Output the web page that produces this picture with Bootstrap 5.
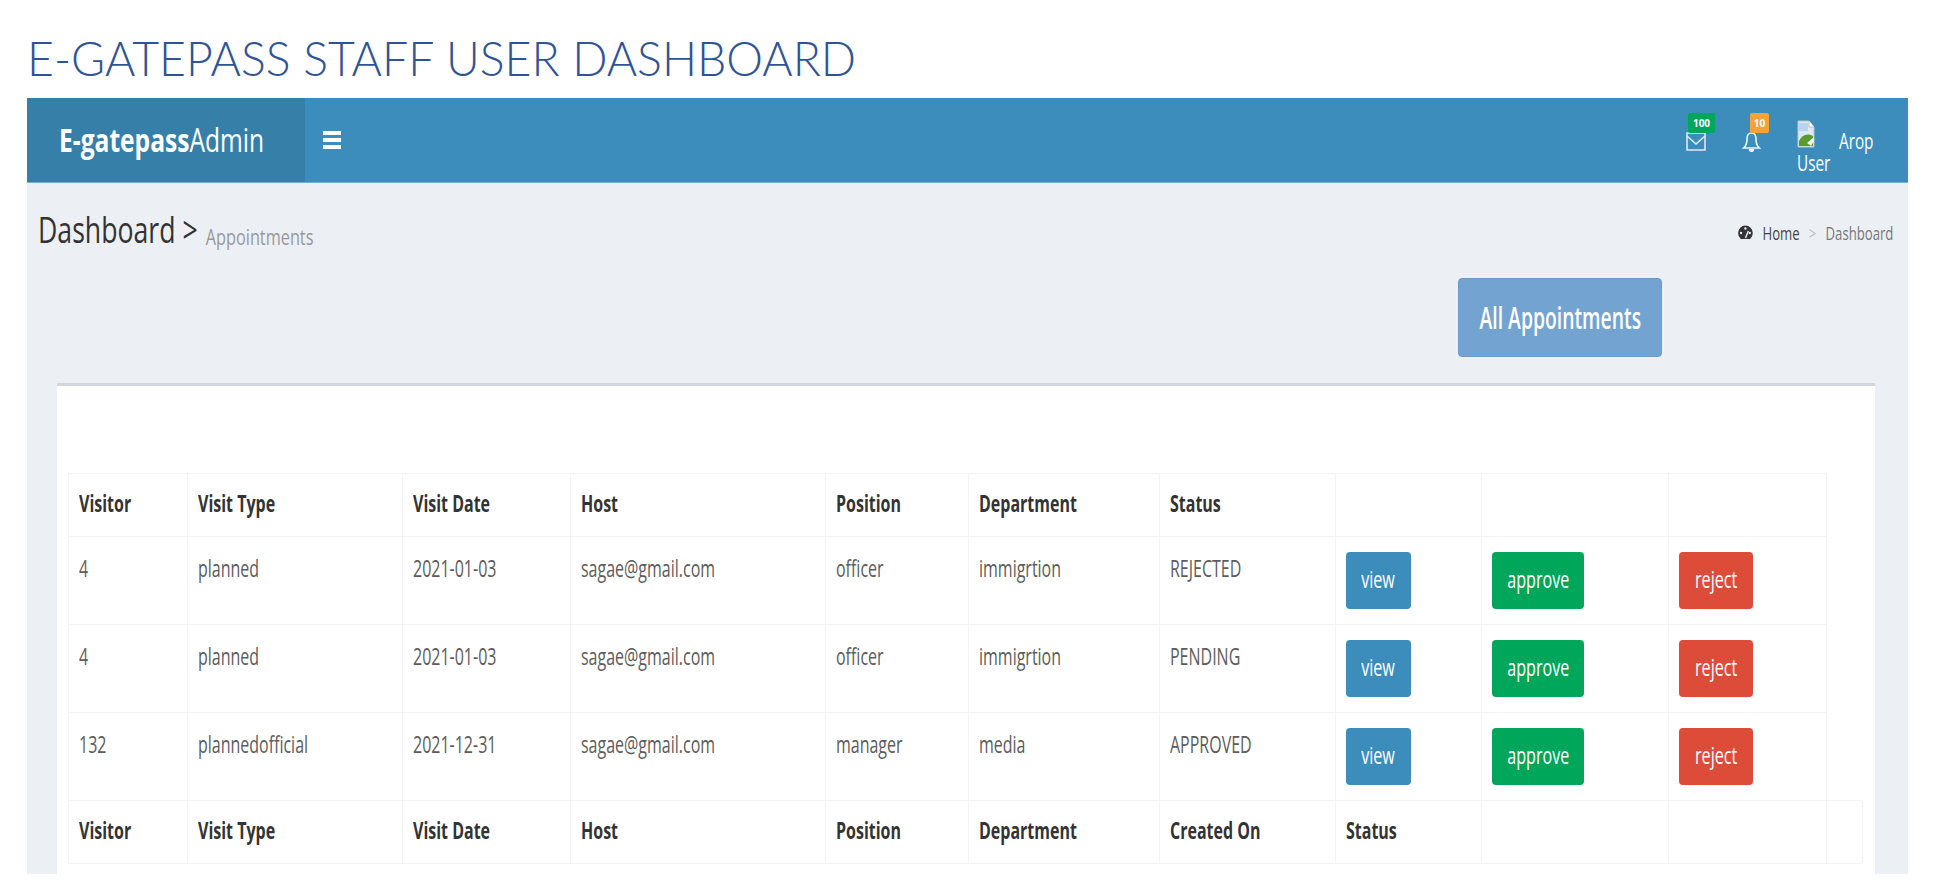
<!DOCTYPE html>
<html lang="en">
<head>
<meta charset="utf-8">
<title>E-Gatepass</title>
<link rel="stylesheet" href="https://cdn.jsdelivr.net/npm/bootstrap@5.3.0/dist/css/bootstrap.min.css">
<style>
html,body{margin:0;background:#fff;overflow:hidden}
body{font-family:"Open Sans",sans-serif;color:#333}
.sq{display:inline-block;transform:scaleX(.695);transform-origin:0 50%;white-space:nowrap}
.sqc{display:inline-block;transform:scaleX(.7);transform-origin:50% 50%;white-space:nowrap}
.sqr{display:inline-flex;align-items:center;transform:scaleX(.71);transform-origin:100% 50%;white-space:nowrap}
.shell{margin-left:27px;width:1881px}
.doc-title{font-family:Lato,sans-serif;font-weight:300;font-size:46.4px;line-height:98px;height:98px;margin:0;color:#2f5496;white-space:nowrap;padding-top:9px}
.topbar{position:relative;height:85px;background:#3c8dbc;color:#fff;border-bottom:1px solid #6fb0d6}
.brandbox{width:278px;background:#367fa9;padding-left:32px;font-size:33px;line-height:84px}
.brandbox .sq{transform:scaleX(.745)}
.burger{margin-left:18px;width:18px;gap:3px}
.burger i{display:block;height:4px;background:#fff}
.tool{position:absolute;display:block}
.t-mail{left:1659px;top:34px;width:20px;height:19px}
.t-bell{left:1715px;top:34px;width:19px;height:20px}
.tip{position:absolute;top:15px;height:20px;border-radius:2px;color:#fff;font-size:10px;font-weight:700;line-height:20px;text-align:center}
.tip-g{left:1661px;width:27px;background:#00a65a}
.tip-o{left:1723px;width:19px;background:#f2a33a}
.ava{position:absolute;left:1770px;top:22px;width:60px;font-size:22px;line-height:27px;z-index:2}
.ava svg{display:block;width:18px;height:28px}
.ava .sq{display:block;margin-top:1px}
.ava .fade{color:#fff;margin-top:8px}
.who{position:absolute;left:1812px;top:26px;font-size:22px;line-height:32px}
.crumbs{height:95px;background:#ecf0f5;padding:25px 15px 0 11px}
.crumb-h{font-size:36px;line-height:44px;color:#333;transform:scaleX(.74)}
.crumb-s{font-size:22px;color:#999;margin-left:11px;vertical-align:-2px}
.crumb-r{font-size:18.5px;color:#444;line-height:22px;padding-top:14px}
.crumb-r svg{width:22px;height:16px;margin-right:13px}
.pathsep{color:#bbb;margin:0 13px}
.pathnow{color:#777}
.content{background:#ecf0f5;padding:0 33px 12px 30px;height:596px}
.actions{height:105px;padding-right:213px}
.btn.all{width:204px;height:79px;background:#73a3d0;border:1px solid #6a9bca;color:#fff;font-size:30px;font-weight:600;padding:0;border-radius:4px;opacity:1;display:flex;align-items:center;justify-content:center}
.btn.all .sqc{transform:scaleX(.645);flex:none}
.panel{background:#fff;border-top:3px solid #d2d6de;padding:87px 0 0 11px;height:491px}
.gate-table{table-layout:fixed;width:1794px;margin:0;border-collapse:collapse;font-size:23px;color:#5c5c5c}
.gate-table th,.gate-table td{border:1px solid #f4f4f4;padding:0 0 0 10px;box-shadow:none;line-height:30px}
.gate-table th{color:#333;font-weight:700;vertical-align:middle}
.gate-table th .sq{padding-bottom:4px}
.gate-table td{vertical-align:top}
.gate-table .dat{padding-top:16px}
.gate-table .act{padding-top:15px;padding-bottom:15px}
.r-h{height:63px}.r-a{height:87px}.r-b{height:88px}.r-f{height:63px}
.c1{width:119px}.c2{width:215px}.c3{width:168px}.c4{width:255px}.c5{width:143px}.c6{width:191px}.c7{width:176px}.c8{width:146px}.c9{width:187px}.c10{width:158px}.c11{width:36px}
.btn.act-btn{height:57px;padding:0;border:0;border-radius:4px;color:#fff;font-size:23px;line-height:55px;display:block}
.b-v{width:65px;background:#3c8dbc}
.b-a{width:92px;background:#00a65a}
.b-r{width:74px;background:#dd4b39}
</style>
</head>
<body>
<div class="shell">
  <h1 class="doc-title">E-GATEPASS STAFF USER DASHBOARD</h1>
  <header class="topbar d-flex">
    <div class="brandbox"><span class="sq"><b>E-gatepass</b>Admin</span></div>
    <div class="burger d-flex flex-column justify-content-center"><i></i><i></i><i></i></div>
    <svg class="tool t-mail" viewBox="0 0 20 19" fill="none" stroke="#dceaf3" stroke-width="1.6"><path d="M1 1h18v17H1z"/><path d="M1 4l9 8 9-8"/></svg>
    <span class="tip tip-g">100</span>
    <svg class="tool t-bell" viewBox="0 0 19 20" fill="none" stroke="#eef5fa" stroke-width="1.6"><path d="M9.500 1C6 1 5 4 5 7c0 4-1 7-3.500 9h16C15 14 14 11 14 7c0-3-1-6-4.500-6z"/><path d="M7.500 17c0 1.500 1 2.300 2 2.300s2-.8 2-2.300" fill="#eef5fa"/></svg>
    <span class="tip tip-o">10</span>
    <div class="ava">
      <svg viewBox="0 0 18 28"><path d="M1 1h11l5 6v20H1z" fill="#dfe8ee" stroke="#b9c4cc"/><path d="M12 1v6h5" fill="#fff" stroke="#b9c4cc"/><path d="M2 3h9v8H2z" fill="#b7d3ef"/><path d="M2 26v-5c3-6 8-8 14-5v10z" fill="#5a9a2e"/><path d="M10 23l7-6v4l-3 5z" fill="#eef2f4"/></svg>
      <span class="sq">User</span>
      <span class="sq fade">Image</span>
    </div>
    <span class="who"><span class="sq">Arop</span></span>
  </header>
  <div class="crumbs d-flex justify-content-between">
    <div class="d-flex align-items-start"><span class="sq crumb-h">Dashboard &gt;<span class="crumb-s">Appointments</span></span></div>
    <div class="crumb-r"><span class="sqr"><svg viewBox="0 0 16 16" preserveAspectRatio="none"><circle cx="8" cy="8" r="7.500" fill="#333"/><circle cx="8" cy="3.500" r="1.200" fill="#ecf0f5"/><circle cx="3.500" cy="8" r="1.200" fill="#ecf0f5"/><circle cx="12.500" cy="8" r="1.200" fill="#ecf0f5"/><path d="M8 13l3-7" stroke="#ecf0f5" stroke-width="1.500"/><path d="M4 14h8v2H4z" fill="#ecf0f5"/></svg>Home<span class="pathsep">&gt;</span><span class="pathnow">Dashboard</span></span></div>
  </div>
  <main class="content">
    <div class="actions d-flex justify-content-end align-items-start">
      <button class="btn all" disabled><span class="sqc">All Appointments</span></button>
    </div>
    <section class="panel">
      <table class="table gate-table">
        <colgroup><col class="c1"><col class="c2"><col class="c3"><col class="c4"><col class="c5"><col class="c6"><col class="c7"><col class="c8"><col class="c9"><col class="c10"><col class="c11"></colgroup>
        <thead><tr class="r-h"><th><span class="sq">Visitor</span></th><th><span class="sq">Visit Type</span></th><th><span class="sq">Visit Date</span></th><th><span class="sq">Host</span></th><th><span class="sq">Position</span></th><th><span class="sq">Department</span></th><th><span class="sq">Status</span></th><th></th><th></th><th></th></tr></thead>
        <tbody>
        <tr class="r-a"><td class="dat"><span class="sq">4</span></td><td class="dat"><span class="sq">planned</span></td><td class="dat"><span class="sq">2021-01-03</span></td><td class="dat"><span class="sq">sagae@gmail.com</span></td><td class="dat"><span class="sq">officer</span></td><td class="dat"><span class="sq">immigrtion</span></td><td class="dat"><span class="sq">REJECTED</span></td><td class="act"><a class="btn act-btn b-v"><span class="sqc">view</span></a></td><td class="act"><a class="btn act-btn b-a"><span class="sqc">approve</span></a></td><td class="act"><a class="btn act-btn b-r"><span class="sqc">reject</span></a></td></tr>
        <tr class="r-b"><td class="dat"><span class="sq">4</span></td><td class="dat"><span class="sq">planned</span></td><td class="dat"><span class="sq">2021-01-03</span></td><td class="dat"><span class="sq">sagae@gmail.com</span></td><td class="dat"><span class="sq">officer</span></td><td class="dat"><span class="sq">immigrtion</span></td><td class="dat"><span class="sq">PENDING</span></td><td class="act"><a class="btn act-btn b-v"><span class="sqc">view</span></a></td><td class="act"><a class="btn act-btn b-a"><span class="sqc">approve</span></a></td><td class="act"><a class="btn act-btn b-r"><span class="sqc">reject</span></a></td></tr>
        <tr class="r-a"><td class="dat"><span class="sq">132</span></td><td class="dat"><span class="sq">plannedofficial</span></td><td class="dat"><span class="sq">2021-12-31</span></td><td class="dat"><span class="sq">sagae@gmail.com</span></td><td class="dat"><span class="sq">manager</span></td><td class="dat"><span class="sq">media</span></td><td class="dat"><span class="sq">APPROVED</span></td><td class="act"><a class="btn act-btn b-v"><span class="sqc">view</span></a></td><td class="act"><a class="btn act-btn b-a"><span class="sqc">approve</span></a></td><td class="act"><a class="btn act-btn b-r"><span class="sqc">reject</span></a></td></tr>
        </tbody>
        <tfoot><tr class="r-f"><th><span class="sq">Visitor</span></th><th><span class="sq">Visit Type</span></th><th><span class="sq">Visit Date</span></th><th><span class="sq">Host</span></th><th><span class="sq">Position</span></th><th><span class="sq">Department</span></th><th><span class="sq">Created On</span></th><th><span class="sq">Status</span></th><th></th><th></th><th></th></tr></tfoot>
      </table>
    </section>
  </main>
</div>
<script src="https://cdn.jsdelivr.net/npm/bootstrap@5.3.0/dist/js/bootstrap.bundle.min.js"></script>
</body>
</html>
